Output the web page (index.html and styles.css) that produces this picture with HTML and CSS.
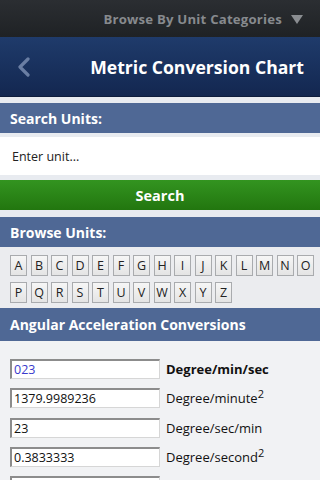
FILE: index.html
```html
<!DOCTYPE html>
<html>
<head>
<meta charset="utf-8">
<link rel="stylesheet" href="styles.css">
</head>
<body>
<header class="topbar">
  <span class="cat">Browse By Unit Categories</span>
  <svg class="tri" width="12" height="9" viewBox="0 0 12 9"><path d="M0 0 H12 L6 9 Z" fill="#8a8d91"/></svg>
</header>
<div class="titlebar">
  <svg class="back" width="14" height="20" viewBox="0 0 14 20"><path d="M11 2 L3 10 L11 18" fill="none" stroke="#6a7ea3" stroke-width="3.2" stroke-linecap="round" stroke-linejoin="round"/></svg>
  <h1 class="title">Metric Conversion Chart</h1>
</div>
<main class="content">
  <h2 class="bar">Search Units:</h2>
  <div class="field">Enter unit...</div>
  <div class="search">Search</div>
  <h2 class="bar">Browse Units:</h2>
  <div class="letters">
    <span class="key">A</span><span class="key">B</span><span class="key">C</span><span class="key">D</span><span class="key">E</span><span class="key">F</span><span class="key">G</span><span class="key">H</span><span class="key">I</span><span class="key">J</span><span class="key">K</span><span class="key">L</span><span class="key">M</span><span class="key">N</span><span class="key">O</span>
    <span class="key">P</span><span class="key">Q</span><span class="key">R</span><span class="key">S</span><span class="key">T</span><span class="key">U</span><span class="key">V</span><span class="key">W</span><span class="key">X</span><span class="key">Y</span><span class="key">Z</span>
  </div>
  <h2 class="bar tall">Angular Acceleration Conversions</h2>
  <div class="list">
    <div class="row"><div class="val active">023</div><div class="unit strong">Degree/min/sec</div></div>
    <div class="row"><div class="val">1379.9989236</div><div class="unit">Degree/minute<sup>2</sup></div></div>
    <div class="row"><div class="val">23</div><div class="unit">Degree/sec/min</div></div>
    <div class="row"><div class="val">0.3833333</div><div class="unit">Degree/second<sup>2</sup></div></div>
    <div class="row"><div class="val"></div></div>
  </div>
</main>
</body>
</html>
```
FILE: styles.css
```css
html, body {
  margin: 0;
  padding: 0;
  width: 320px;
  height: 480px;
  overflow: hidden;
  background: #eef0f3;
  font-family: "Open Sans", "Noto Sans", "DejaVu Sans", sans-serif;
}
.topbar {
  height: 37px;
  background: linear-gradient(#2b2e32, #1f2225);
  display: flex;
  align-items: center;
  justify-content: flex-end;
  padding-right: 17px;
  box-sizing: border-box;
  gap: 9px;
}
.cat {
  color: #878a8e;
  font-weight: bold;
  font-size: 13.2px;
  letter-spacing: 0.2px;
}
.tri { margin-top: 1px; }
.titlebar {
  height: 60px;
  background: linear-gradient(#1f3b6b, #132750);
  display: flex;
  align-items: center;
  justify-content: space-between;
  padding: 0 16px 0 17px;
  box-sizing: border-box;
  border-bottom: 1px solid #0e1d3c;
}
.title {
  margin: 0;
  color: #fff;
  font-size: 17.6px;
  font-weight: bold;
}
.content {
  padding-top: 6px;
  background: #e8ebf0;
}
.bar {
  margin: 0;
  height: 30px;
  background: #4f6895;
  color: #fff;
  font-size: 14px;
  font-weight: bold;
  display: flex;
  align-items: center;
  padding-left: 10px;
  box-sizing: border-box;
}
.bar.tall { height: 33px; }
.field {
  margin-top: 4px;
  height: 38px;
  background: #fff;
  display: flex;
  align-items: center;
  padding-left: 12px;
  font-size: 12.5px;
  color: #222;
}
.search {
  margin: 5px 0 7px;
  height: 30px;
  background: linear-gradient(#339420, #22760f);
  color: #fff;
  font-weight: bold;
  font-size: 14.5px;
  display: flex;
  align-items: center;
  justify-content: center;
}
.letters {
  background: #ebecef;
  padding: 8px 0 5px 10px;
  display: flex;
  flex-wrap: wrap;
  column-gap: 3.5px;
  row-gap: 6px;
}
.key {
  width: 17px;
  height: 21px;
  box-sizing: border-box;
  border: 1px solid #a9abae;
  background: linear-gradient(#f6f6f6, #e4e4e4);
  display: flex;
  align-items: center;
  justify-content: center;
  font-size: 12.5px;
  color: #222;
}
.list {
  background: #f1f2f4;
  padding: 18px 0 0 10px;
  display: flex;
  flex-direction: column;
  gap: 9.3px;
}
.row {
  display: flex;
  align-items: center;
  gap: 6px;
}
.val {
  width: 150px;
  height: 20px;
  box-sizing: border-box;
  background: #fff;
  border-top: 2px solid #8c8c8c;
  border-left: 2px solid #8c8c8c;
  border-right: 1px solid #d6d6d6;
  border-bottom: 1px solid #d6d6d6;
  font-size: 12.5px;
  color: #111;
  padding-left: 2px;
  display: flex;
  align-items: center;
}
.val.active { color: #3a3acc; }
.unit {
  font-size: 13px;
  color: #111;
}
.unit.strong { font-weight: bold; }
.unit sup {
  font-size: 11px;
  line-height: 0;
  vertical-align: 5px;
}
```
